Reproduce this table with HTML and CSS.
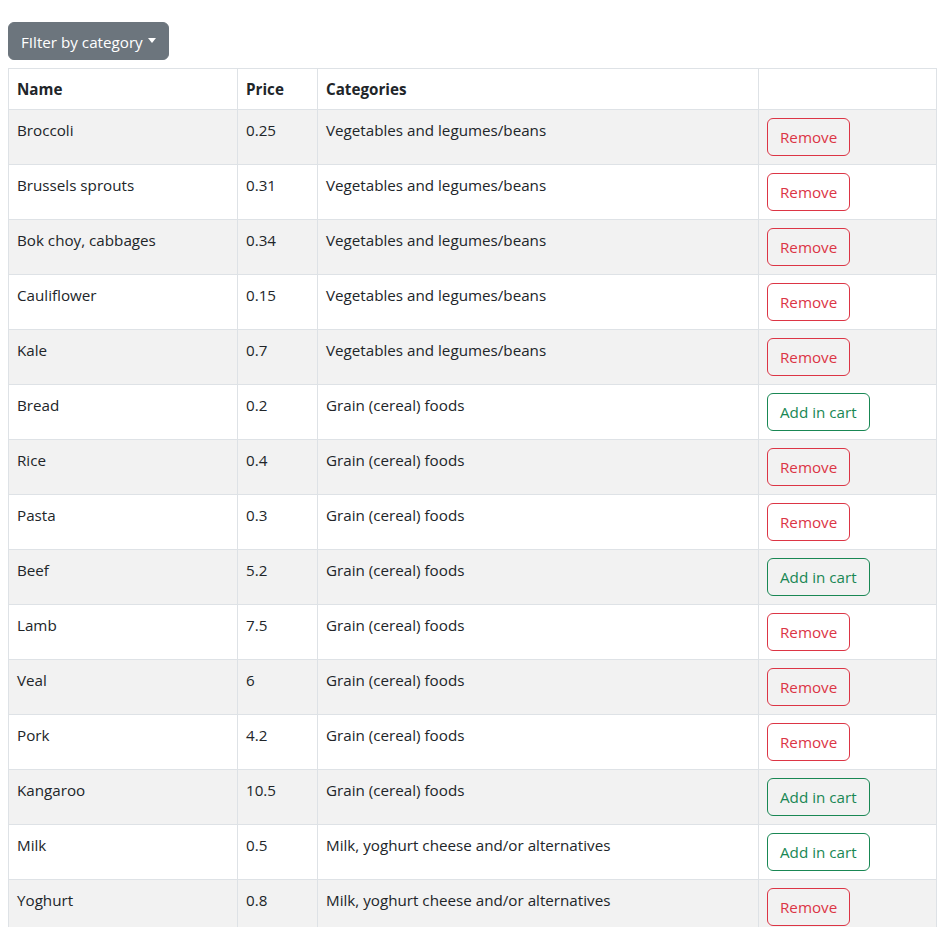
FILE: index.html
```html
<!DOCTYPE html>
<html>
<head>
<meta charset="utf-8">
<link rel="stylesheet" href="styles.css">
</head>
<body>
<div class="page">
  <button class="filter-btn">FIlter by category<span class="caret"></span></button>
  <table class="products">
    <colgroup>
      <col class="c-name"><col class="c-price"><col class="c-cat"><col class="c-act">
    </colgroup>
    <thead>
      <tr><th>Name</th><th>Price</th><th>Categories</th><th></th></tr>
    </thead>
    <tbody>
      <tr><td>Broccoli</td><td>0.25</td><td>Vegetables and legumes/beans</td><td><button class="btn remove">Remove</button></td></tr>
      <tr><td>Brussels sprouts</td><td>0.31</td><td>Vegetables and legumes/beans</td><td><button class="btn remove">Remove</button></td></tr>
      <tr><td>Bok choy, cabbages</td><td>0.34</td><td>Vegetables and legumes/beans</td><td><button class="btn remove">Remove</button></td></tr>
      <tr><td>Cauliflower</td><td>0.15</td><td>Vegetables and legumes/beans</td><td><button class="btn remove">Remove</button></td></tr>
      <tr><td>Kale</td><td>0.7</td><td>Vegetables and legumes/beans</td><td><button class="btn remove">Remove</button></td></tr>
      <tr><td>Bread</td><td>0.2</td><td>Grain (cereal) foods</td><td><button class="btn add">Add in cart</button></td></tr>
      <tr><td>Rice</td><td>0.4</td><td>Grain (cereal) foods</td><td><button class="btn remove">Remove</button></td></tr>
      <tr><td>Pasta</td><td>0.3</td><td>Grain (cereal) foods</td><td><button class="btn remove">Remove</button></td></tr>
      <tr><td>Beef</td><td>5.2</td><td>Grain (cereal) foods</td><td><button class="btn add">Add in cart</button></td></tr>
      <tr><td>Lamb</td><td>7.5</td><td>Grain (cereal) foods</td><td><button class="btn remove">Remove</button></td></tr>
      <tr><td>Veal</td><td>6</td><td>Grain (cereal) foods</td><td><button class="btn remove">Remove</button></td></tr>
      <tr><td>Pork</td><td>4.2</td><td>Grain (cereal) foods</td><td><button class="btn remove">Remove</button></td></tr>
      <tr><td>Kangaroo</td><td>10.5</td><td>Grain (cereal) foods</td><td><button class="btn add">Add in cart</button></td></tr>
      <tr><td>Milk</td><td>0.5</td><td>Milk, yoghurt cheese and/or alternatives</td><td><button class="btn add">Add in cart</button></td></tr>
      <tr><td>Yoghurt</td><td>0.8</td><td>Milk, yoghurt cheese and/or alternatives</td><td><button class="btn remove">Remove</button></td></tr>
    </tbody>
  </table>
</div>
</body>
</html>
```
FILE: styles.css
```css
html, body {
  margin: 0;
  padding: 0;
  background: #fff;
}
body {
  font-family: "Open Sans", "Noto Sans", "Liberation Sans", sans-serif;
  font-size: 15.2px;
  line-height: 24px;
  color: #212529;
}
.page {
  padding: 22px 8px 8px 8px;
  display: flex;
  flex-direction: column;
  align-items: flex-start;
  gap: 8px;
}
.filter-btn {
  font: inherit;
  font-size: 15.2px;
  line-height: 24px;
  color: #fff;
  background: #6c757d;
  border: 1px solid #6c757d;
  border-radius: 6px;
  padding: 7px 12px 5px 12px;
  height: 38px;
  display: inline-flex;
  align-items: center;
  cursor: pointer;
}
.caret {
  display: inline-block;
  margin-left: 5px;
  margin-top: -3px;
  border-top: 5px solid #fff;
  border-left: 4.5px solid transparent;
  border-right: 4.5px solid transparent;
}
.products {
  width: 928px;
  border-collapse: collapse;
  table-layout: fixed;
}
.c-name { width: 229px; }
.c-price { width: 80px; }
.c-cat { width: 441px; }
.c-act { width: 178px; }
.products th, .products td {
  border: 1px solid #dee2e6;
  padding: 8px;
  text-align: left;
  vertical-align: top;
}
.products th {
  font-weight: 700;
}
.products tbody tr:nth-child(odd) td {
  background: #f2f2f2;
}
.btn {
  font: inherit;
  font-size: 15.2px;
  line-height: 24px;
  height: 38px;
  padding: 6px 12px;
  background: transparent;
  border-radius: 6px;
  cursor: pointer;
  display: block;
}
.remove {
  color: #dc3545;
  border: 1px solid #dc3545;
}
.add {
  color: #198754;
  border: 1px solid #198754;
}
```
